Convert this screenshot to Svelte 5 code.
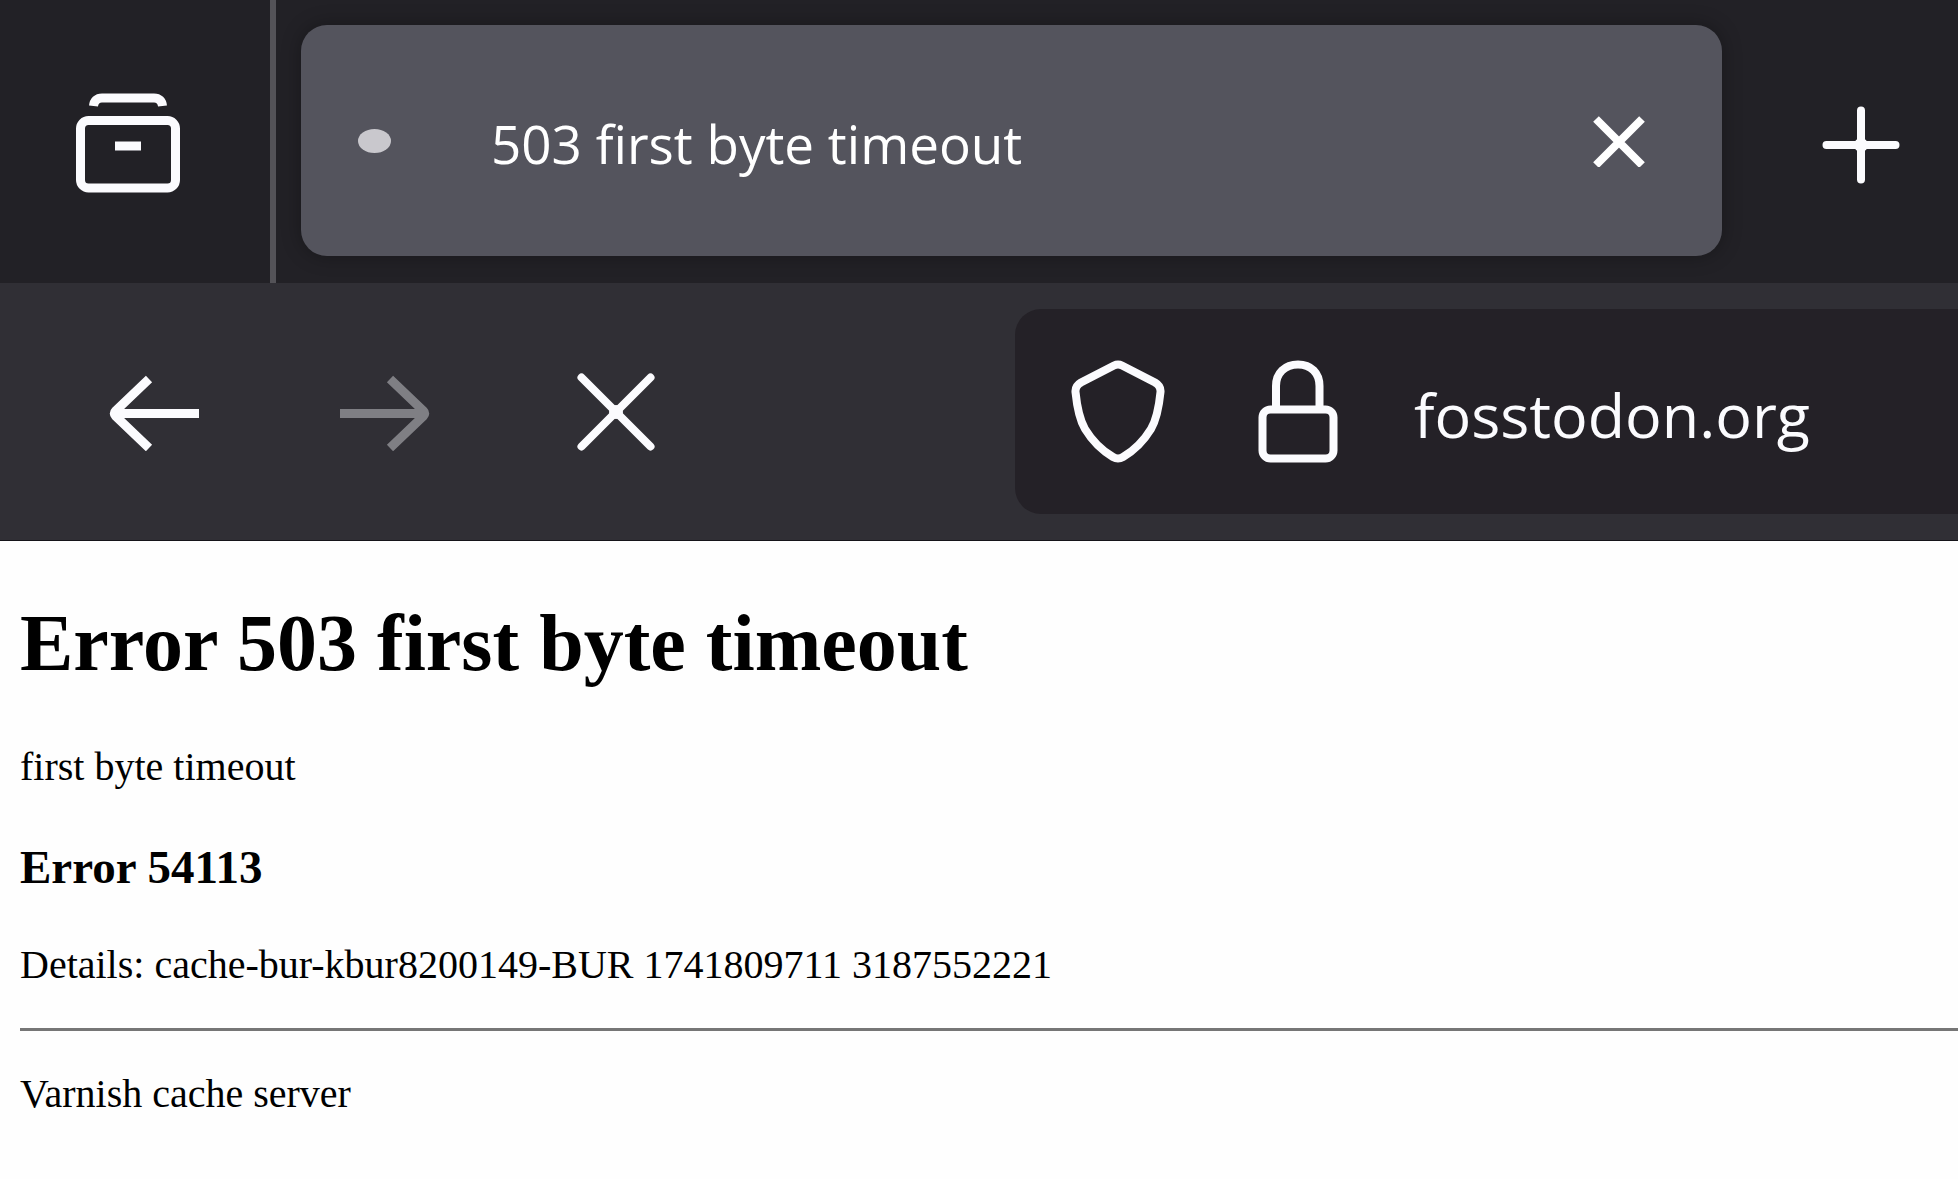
<script>
  let address = $state('fosstodon.org');
  const title = '503 first byte timeout';
</script>

<div class="browser">
  <header>
    <div class="tabstrip">
      <button class="view" aria-label="Recent browsing">
        <svg width="104" height="100" viewBox="0 0 104 100">
          <path d="M17.500 13C18 8 21 5 26 5H78C83 5 86 8 86.500 13" />
          <rect x="4.500" y="27.500" width="95" height="67.500" rx="8" />
          <path d="M39 53H65" />
        </svg>
      </button>
      <div class="tab">
        <span class="spinner"></span>
        <span class="title">{title}</span>
        <button class="close" aria-label="Close tab">
          <svg width="52" height="52" viewBox="0 0 52 52">
            <path d="M3 4L49 50M49 4L3 50" />
          </svg>
        </button>
      </div>
      <button class="new" aria-label="New tab">
        <svg width="78" height="78" viewBox="0 0 78 78">
          <path d="M4.500 39H73.500M39 4.500V73.500" />
          <circle cx="39" cy="39" r="7" />
        </svg>
      </button>
    </div>

    <nav class="toolbar">
      <div class="actions">
        <button aria-label="Back">
          <svg width="90" height="78" viewBox="0 0 90 78">
            <path d="M90 40.500H8M40 6L6.500 38Q4 40.500 6.500 43L40 75" />
          </svg>
        </button>
        <button aria-label="Forward" disabled>
          <svg width="90" height="78" viewBox="0 0 90 78">
            <path d="M0 40.500H82M50 6L83.500 38Q86 40.500 83.500 43L50 75" />
          </svg>
        </button>
        <button class="stop" aria-label="Stop loading">
          <svg width="78" height="78" viewBox="0 0 78 78">
            <path d="M4.500 4.500L73.500 73.500M73.500 4.500L4.500 73.500" />
            <circle cx="39" cy="39" r="7" />
          </svg>
        </button>
      </div>
      <div class="urlbar">
        <button aria-label="Tracking protection">
          <svg width="94" height="103" viewBox="0 0 94 103">
            <path d="M43 5.500Q47 3.500 51 5.500L84 22.500Q90 26 89.500 32Q87 57 80 69Q69 87 52 97Q47 100 42 97Q25 87 14 69Q7 57 4.500 32Q4 26 10 22.500Z" />
          </svg>
        </button>
        <button aria-label="Connection secure">
          <svg width="80" height="103" viewBox="0 0 80 103">
            <path d="M18 49V26C18 13 27 4.500 40 4.500S61.500 13 61.500 26V49" />
            <rect x="4.500" y="49.500" width="71" height="49" rx="8" />
          </svg>
        </button>
        <input type="text" aria-label="Address" bind:value={address} />
      </div>
    </nav>
  </header>

  <main>
    <h1>Error 503 first byte timeout</h1>
    <p>first byte timeout</p>
    <h3>Error 54113</h3>
    <p>Details: cache-bur-kbur8200149-BUR 1741809711 3187552221</p>
    <hr />
    <p>Varnish cache server</p>
  </main>
</div>

<style>
  :global(body) {
    background: #fefefe;
  }

  .browser {
    overflow: hidden;
  }

  header {
    font-family: 'Open Sans', 'Noto Sans', sans-serif;
    color: #fbfbfe;
    border-bottom: 1px solid #151419;
  }

  button {
    display: flex;
    flex: none;
    align-items: center;
    padding: 0;
    border: 0;
    background: none;
    color: inherit;
  }

  svg {
    display: block;
    flex: none;
    fill: none;
    stroke: currentColor;
    stroke-width: 8;
  }

  circle {
    fill: currentColor;
    stroke: none;
  }

  .tabstrip {
    display: flex;
    height: 283px;
    background: #222126;
  }

  .view {
    box-sizing: border-box;
    width: 276px;
    padding: 2px 0 0 76px;
    border-right: 6px solid #545358;
  }

  .view svg {
    stroke-width: 9;
  }

  .tab {
    display: flex;
    flex: 1;
    align-items: center;
    min-width: 0;
    margin: 25px 0 27px 25px;
    padding: 0 77px 0 57px;
    border-radius: 26px;
    background: #54545d;
    box-shadow: 0 0 20px rgb(0 0 0 / 30%);
  }

  .spinner {
    flex: none;
    width: 33px;
    height: 24px;
    border-radius: 50%;
    background: #c9c8cd;
  }

  .title {
    flex: 1;
    margin-left: 100px;
    padding-top: 6px;
    font-size: 53px;
    line-height: 72px;
    white-space: nowrap;
    color: #fff;
  }

  .close {
    color: #fff;
  }

  .new {
    width: 236px;
    padding: 6px 0 0 100px;
  }

  .new svg,
  .stop svg {
    stroke-linecap: round;
  }

  .toolbar {
    display: flex;
    align-items: center;
    padding: 26px 0;
    background: #302f35;
  }

  .actions {
    display: flex;
    flex: none;
    align-items: center;
    gap: 141px;
    width: 906px;
    padding-left: 109px;
  }

  .actions button {
    justify-content: center;
    width: 90px;
  }

  .actions svg {
    stroke-width: 9;
  }

  .actions .stop svg {
    stroke-width: 8;
  }

  button:disabled {
    color: #7f7f84;
  }

  .urlbar {
    display: flex;
    flex: 1;
    align-items: center;
    min-width: 0;
    height: 205px;
    padding-left: 56px;
    gap: 93px;
    border-radius: 26px 0 0 26px;
    background: #242127;
  }

  input {
    flex: 1;
    min-width: 0;
    margin-left: -17px;
    padding: 6px 0 0;
    border: 0;
    outline: 0;
    background: none;
    font-family: inherit;
    font-size: 61px;
    color: inherit;
  }

  main {
    padding: 56px 0 40px 20px;
    font-family: 'Liberation Serif', 'Times New Roman', serif;
    font-size: 40px;
    line-height: 46px;
    color: #000;
  }

  h1 {
    margin: 0 0 55px;
    font-size: 80px;
    line-height: 92px;
  }

  p {
    margin: 0;
  }

  h3 {
    margin: 50px 0 48px;
    font-size: 47px;
    line-height: 54px;
  }

  hr {
    height: 3px;
    margin: 40px 0;
    border: 0;
    background: #767676;
  }
</style>
